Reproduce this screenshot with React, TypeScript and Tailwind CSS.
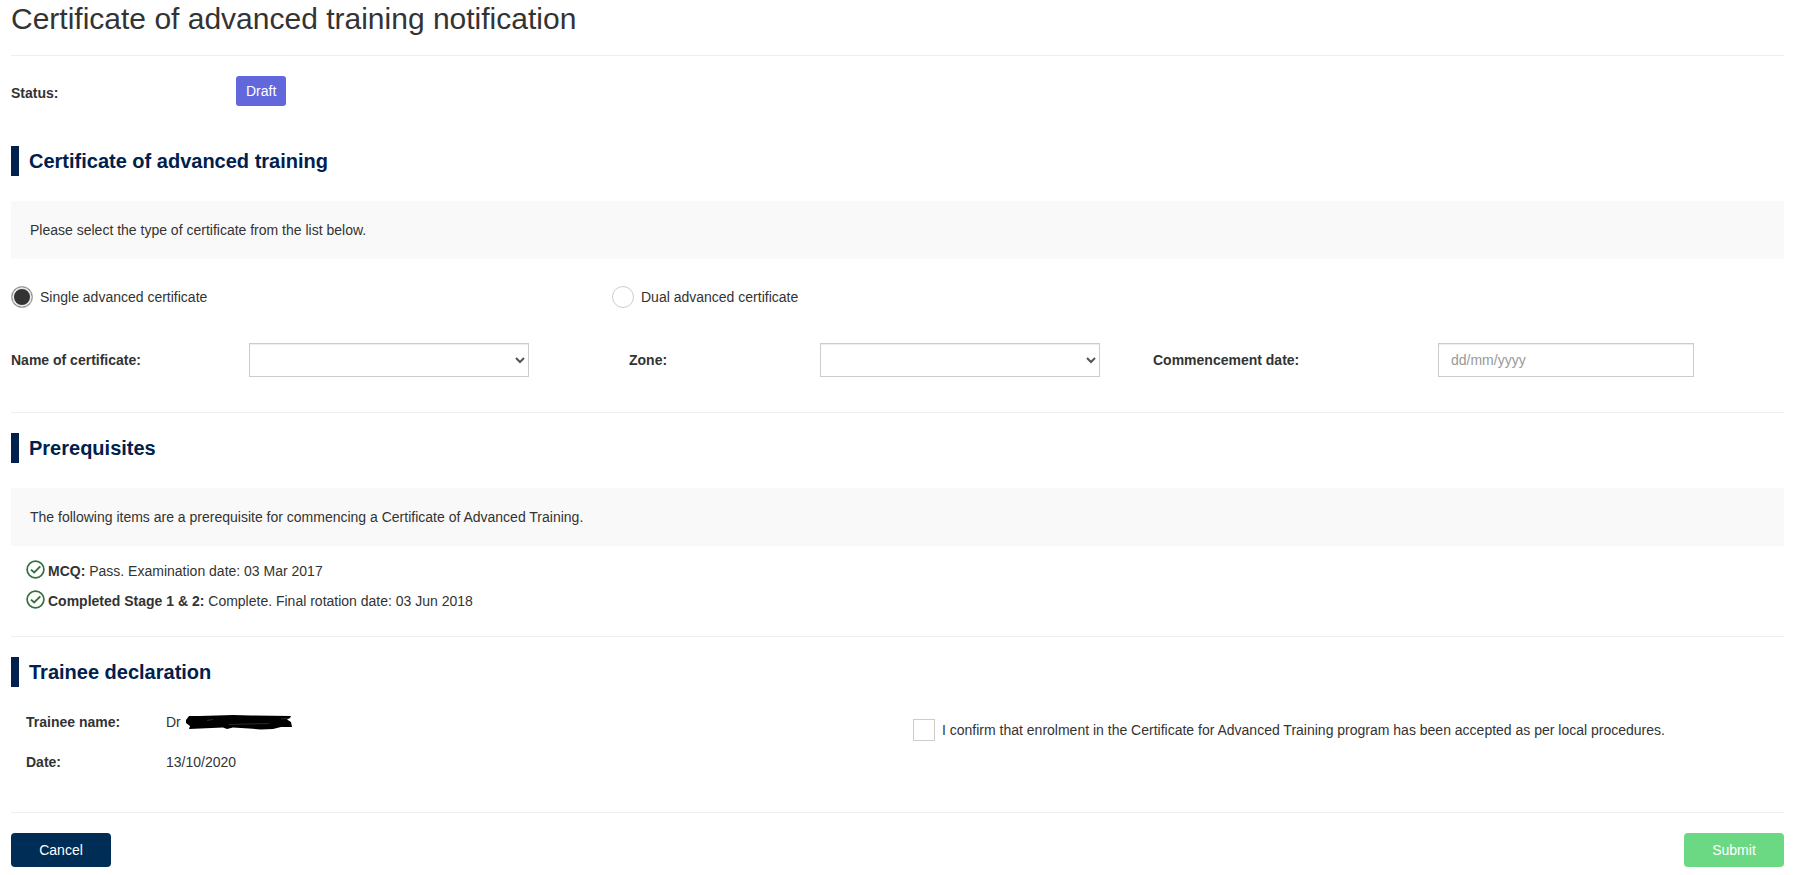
import { useState, type ReactNode } from 'react'

// ─── Shared pieces ────────────────────────────────────────────────────────────

function Divider() {
  return <hr className="border-t border-[#eeeeee]" />
}

function SectionTitle({ children }: { children: ReactNode }) {
  return (
    <h2 className="mt-5 border-l-8 border-[#00204e] pl-2.5 text-xl leading-[30px] font-bold text-[#00204e]">
      {children}
    </h2>
  )
}

function InfoBox({ children }: { children: ReactNode }) {
  return <p className="mt-[25px] bg-[#f9f9f9] px-[19px] py-[19px] leading-5">{children}</p>
}

function CheckCircle() {
  return (
    <svg viewBox="0 0 20 20" className="size-5 shrink-0" fill="none" stroke="#35703f" aria-hidden="true">
      <circle cx="9.500" cy="9.500" r="8.400" strokeWidth="1.700" />
      <path d="M5 9.600 8.200 12.500 14.300 6.400" strokeWidth="1.900" />
    </svg>
  )
}

// Marker strokes hiding the trainee's surname
function Redacted() {
  return (
    <svg viewBox="0 0 108 16" className="h-4 w-[108px]" role="img" aria-label="Name hidden">
      <path
        d="M1 6 4 2 14 2 32 1.500 48 1 66 1.500 106 2 105 4 102 5.500 106 8 107 13 96 13 88 15 76 15.500 64 14.500 48 13.500 42 15 38 13.500 4 15 5 12 1 9Z"
        fill="#000"
      />
      <path d="M22 6.500 28 5.500M44 10.500 84 9.500M96 5 104 4" stroke="#555" strokeWidth=".5" fill="none" />
    </svg>
  )
}

interface CertificateRadioProps {
  id: string
  label: string
  checked: boolean
  onSelect: () => void
}

function CertificateRadio({ id, label, checked, onSelect }: CertificateRadioProps) {
  return (
    <div className="flex items-center gap-[7px]">
      <input
        id={id}
        type="radio"
        name="certificateType"
        checked={checked}
        onChange={onSelect}
        className="size-[22px] appearance-none rounded-full border border-[#d0cdc7] bg-white checked:border-[#adadad] checked:bg-[#333333] checked:shadow-[inset_0_0_0_2px_#e6e6e6]"
      />
      <label htmlFor={id}>{label}</label>
    </div>
  )
}

const fieldClass =
  'h-[34px] max-w-full border border-[#cccccc] bg-white pl-3 pr-[11px] text-sm text-[#555555] shadow-[inset_0_1px_1px_rgba(0,0,0,0.075)]'

const prerequisites = [
  { name: 'MCQ:', detail: 'Pass. Examination date: 03 Mar 2017' },
  { name: 'Completed Stage 1 & 2:', detail: 'Complete. Final rotation date: 03 Jun 2018' },
]

// ─── App ──────────────────────────────────────────────────────────────────────

export default function App() {
  const [certificateType, setCertificateType] = useState<'single' | 'dual'>('single')

  return (
    <form
      className="bg-white pr-[13px] pl-[11px] font-['Liberation_Sans',Arial,sans-serif] text-sm leading-5 text-[#333333]"
      onSubmit={(e) => e.preventDefault()}
    >
      <h1 className="pt-0.5 pb-5 text-[30px] leading-[33px]">Certificate of advanced training notification</h1>
      <Divider />

      <div className="mt-5 mb-10 grid grid-cols-[225fr_1548fr] items-center">
        <span className="pt-1 font-bold">Status:</span>
        <div>
          <span className="inline-block rounded-[3px] bg-[#6268db] px-2.5 leading-[30px] text-white">Draft</span>
        </div>
      </div>

      {/* Certificate type */}
      <section>
        <SectionTitle>Certificate of advanced training</SectionTitle>
        <InfoBox>Please select the type of certificate from the list below.</InfoBox>

        <div className="mt-[27px] grid grid-cols-[601fr_1172fr]">
          <CertificateRadio
            id="single"
            label="Single advanced certificate"
            checked={certificateType === 'single'}
            onSelect={() => setCertificateType('single')}
          />
          <CertificateRadio
            id="dual"
            label="Dual advanced certificate"
            checked={certificateType === 'dual'}
            onSelect={() => setCertificateType('dual')}
          />
        </div>

        <div className="mt-[35px] mb-[35px] grid grid-cols-[238fr_380fr_191fr_333fr_285fr_346fr] items-center">
          <label htmlFor="certificate" className="font-bold">Name of certificate:</label>
          <select id="certificate" className={`w-[280px] ${fieldClass}`} defaultValue="">
            <option value="" />
          </select>
          <label htmlFor="zone" className="font-bold">Zone:</label>
          <select id="zone" className={`w-[280px] ${fieldClass}`} defaultValue="">
            <option value="" />
          </select>
          <label htmlFor="commencement" className="font-bold">Commencement date:</label>
          <input
            id="commencement"
            type="text"
            placeholder="dd/mm/yyyy"
            className={`w-[256px] placeholder:text-[#999999] ${fieldClass}`}
          />
        </div>
      </section>
      <Divider />

      {/* Prerequisites */}
      <section>
        <SectionTitle>Prerequisites</SectionTitle>
        <InfoBox>The following items are a prerequisite for commencing a Certificate of Advanced Training.</InfoBox>
        <ul className="mt-[9px] mb-[21px] pl-[15px]">
          {prerequisites.map((item) => (
            <li key={item.name} className="flex h-[30px] items-center gap-0.5">
              <CheckCircle />
              <span className="pt-0.5">
                <strong>{item.name}</strong> {item.detail}
              </span>
            </li>
          ))}
        </ul>
      </section>
      <Divider />

      {/* Declaration */}
      <section>
        <SectionTitle>Trainee declaration</SectionTitle>
        <div className="mt-[25px] mb-10 grid grid-cols-[887fr_871fr] items-start pl-[15px]">
          <dl className="grid grid-cols-[140px_1fr] gap-y-5">
            <dt className="font-bold">Trainee name:</dt>
            <dd className="flex items-center gap-1">
              Dr <Redacted />
            </dd>
            <dt className="font-bold">Date:</dt>
            <dd>13/10/2020</dd>
          </dl>
          <div className="mt-[7px] flex items-center gap-[7px]">
            <input
              id="confirm"
              type="checkbox"
              className="size-[22px] appearance-none border border-[#d0cdc7] bg-white checked:bg-[#333333] checked:shadow-[inset_0_0_0_2px_#e6e6e6]"
            />
            <label htmlFor="confirm">
              I confirm that enrolment in the Certificate for Advanced Training program has been accepted as per local
              procedures.
            </label>
          </div>
        </div>
      </section>
      <Divider />

      <div className="flex justify-between pt-5 pb-2">
        <button type="button" className="h-[34px] w-[100px] rounded bg-[#002d56] text-white">
          Cancel
        </button>
        <button type="submit" className="h-[34px] w-[100px] rounded bg-[#6bd883] text-white">
          Submit
        </button>
      </div>
    </form>
  )
}
